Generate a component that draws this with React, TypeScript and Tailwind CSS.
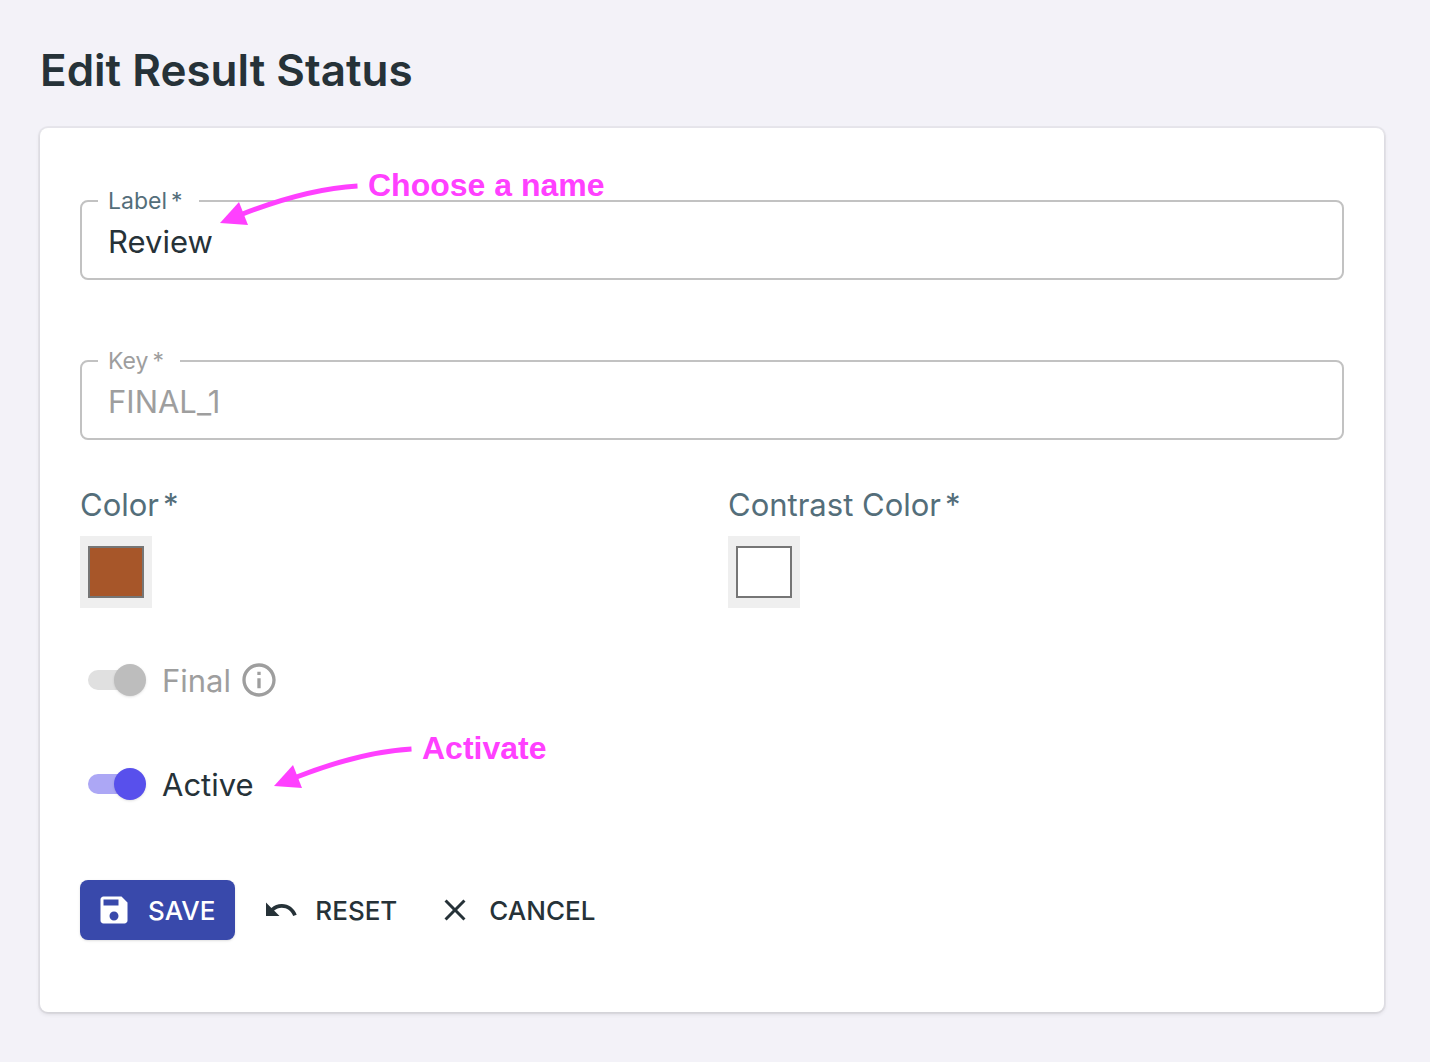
import { ReactNode } from "react";

type FieldProps = {
  id: string;
  label: string;
  value: string;
  disabled?: boolean;
  children?: ReactNode;
};

function Field({ id, label, value, disabled, children }: FieldProps) {
  return (
    <div className="relative">
      <fieldset
        disabled={disabled}
        className="rounded-lg border-2 border-[#c2c2c2] px-4 pb-[9px]"
      >
        <legend
          className={`pr-4 pl-2.5 text-[23px] leading-6 ${disabled ? "text-[#9e9e9e]" : "text-[#546e7a]"}`}
        >
          <label htmlFor={id}>
            {label}
            <span className="ml-1">*</span>
          </label>
        </legend>
        <input
          id={id}
          type="text"
          required
          defaultValue={value}
          className="block h-14 w-full bg-transparent px-2.5 text-[31px] text-[#263238] outline-none disabled:text-[#9e9e9e]"
        />
      </fieldset>
      {children}
    </div>
  );
}

type ColorFieldProps = {
  id: string;
  label: string;
  value: string;
};

function ColorField({ id, label, value }: ColorFieldProps) {
  return (
    <div>
      <label htmlFor={id} className="mb-4 block text-[31px] leading-[30px] text-[#546e7a]">
        {label}
        <span className="ml-1">*</span>
      </label>
      <input
        id={id}
        type="color"
        defaultValue={value}
        className="block size-[72px] appearance-none bg-[#efefef] px-2 py-2.5 [&::-webkit-color-swatch]:rounded-none [&::-webkit-color-swatch]:border-2 [&::-webkit-color-swatch]:border-[#767676] [&::-webkit-color-swatch-wrapper]:p-0"
      />
    </div>
  );
}

type SwitchProps = {
  id: string;
  label: string;
  disabled?: boolean;
  children?: ReactNode;
};

function Switch({ id, label, disabled, children }: SwitchProps) {
  return (
    <div className="relative flex h-12 items-center pl-2">
      <input
        id={id}
        type="checkbox"
        role="switch"
        defaultChecked
        disabled={disabled}
        className="relative h-5 w-[52px] appearance-none rounded-full bg-[#aca7f5] before:absolute before:-top-1.5 before:-right-1.5 before:size-8 before:rounded-full before:bg-[#5850ec] before:shadow before:content-[''] disabled:bg-[#e0e0e0] disabled:before:bg-[#bdbdbd]"
      />
      <label
        htmlFor={id}
        className={`ml-[22px] pt-0.5 text-[31px] leading-10 ${disabled ? "text-[#9e9e9e]" : "text-[#263238]"}`}
      >
        {label}
      </label>
      {children}
    </div>
  );
}

function Note({ text }: { text: string }) {
  return (
    <div className="flex items-start gap-2.5 font-['Liberation_Sans',Arial,sans-serif] text-[32px] leading-8 font-bold whitespace-nowrap text-[#ff40ff]">
      <svg width="138" height="46" viewBox="0 0 138 46" className="mt-[11px]" aria-hidden="true">
        <path d="M137.5 6Q86 9 20 35" fill="none" stroke="currentColor" strokeWidth="5" />
        <path d="M0 43 19 22 28 45Z" fill="currentColor" />
      </svg>
      <span>{text}</span>
    </div>
  );
}

function Icon({ d, className = "size-9" }: { d: string; className?: string }) {
  return (
    <svg viewBox="0 0 24 24" fill="currentColor" className={className} aria-hidden="true">
      <path d={d} />
    </svg>
  );
}

const icons = {
  save: "M17 3H5c-1.11 0-2 .9-2 2v14c0 1.1.89 2 2 2h14c1.1 0 2-.9 2-2V7l-4-4zm-5 16c-1.66 0-3-1.34-3-3s1.34-3 3-3 3 1.34 3 3-1.34 3-3 3zm3-10H5V5h10v4z",
  undo: "M12.5 8c-2.65 0-5.05.99-6.9 2.6L2 7v9h9l-3.62-3.62c1.39-1.16 3.16-1.88 5.12-1.88 3.54 0 6.55 2.31 7.6 5.5l2.37-.78C21.08 11.03 17.15 8 12.5 8z",
  close: "M19 6.41 17.59 5 12 10.59 6.41 5 5 6.41 10.59 12 5 17.59 6.41 19 12 13.41 17.59 19 19 17.59 13.41 12z",
  info: "M11 7h2v2h-2zm0 4h2v6h-2zm1-9C6.48 2 2 6.48 2 12s4.48 10 10 10 10-4.48 10-10S17.52 2 12 2zm0 18c-4.41 0-8-3.59-8-8s3.59-8 8-8 8 3.59 8 8-3.59 8-8 8z",
};

export default function App() {
  return (
    <main className="min-h-screen bg-[#f3f2f8] pt-10 pr-[46px] pb-[50px] pl-10 font-[Inter,sans-serif] text-[#263238]">
      <h1 className="text-[44px] leading-[60px] font-semibold">Edit Result Status</h1>
      <form className="mt-7 rounded-lg bg-white px-10 pt-[61px] pb-[72px] shadow-[0_0_0_2px_rgba(63,63,68,0.06),0_2px_4px_rgba(63,63,68,0.15)]">
        <Field id="label" label="Label" value="Review">
          <div className="absolute -top-5 left-[140px]">
            <Note text="Choose a name" />
          </div>
        </Field>
        <div className="mt-[69px]">
          <Field id="key" label="Key" value="FINAL_1" disabled />
        </div>
        <div className="mt-[50px] grid grid-cols-2 gap-8">
          <ColorField id="color" label="Color" value="#a75629" />
          <ColorField id="contrast-color" label="Contrast Color" value="#ffffff" />
        </div>
        <div className="mt-12 flex flex-col gap-14">
          <Switch id="final" label="Final" disabled>
            <Icon d={icons.info} className="ml-2 size-10 text-[#9e9e9e]" />
          </Switch>
          <Switch id="active" label="Active">
            <div className="absolute -top-7 left-[194px]">
              <Note text="Activate" />
            </div>
          </Switch>
        </div>
        <div className="mt-[72px] flex gap-4 text-[26px] font-medium">
          <button
            type="submit"
            className="flex h-[60px] items-center gap-4 rounded-lg bg-[#3949ab] pr-5 pl-4 text-white shadow"
          >
            <Icon d={icons.save} />
            SAVE
          </button>
          <button type="reset" className="flex h-[60px] items-center gap-4 rounded-lg px-3">
            <Icon d={icons.undo} />
            RESET
          </button>
          <button type="button" className="flex h-[60px] items-center gap-4 rounded-lg px-3">
            <Icon d={icons.close} />
            CANCEL
          </button>
        </div>
      </form>
    </main>
  );
}
